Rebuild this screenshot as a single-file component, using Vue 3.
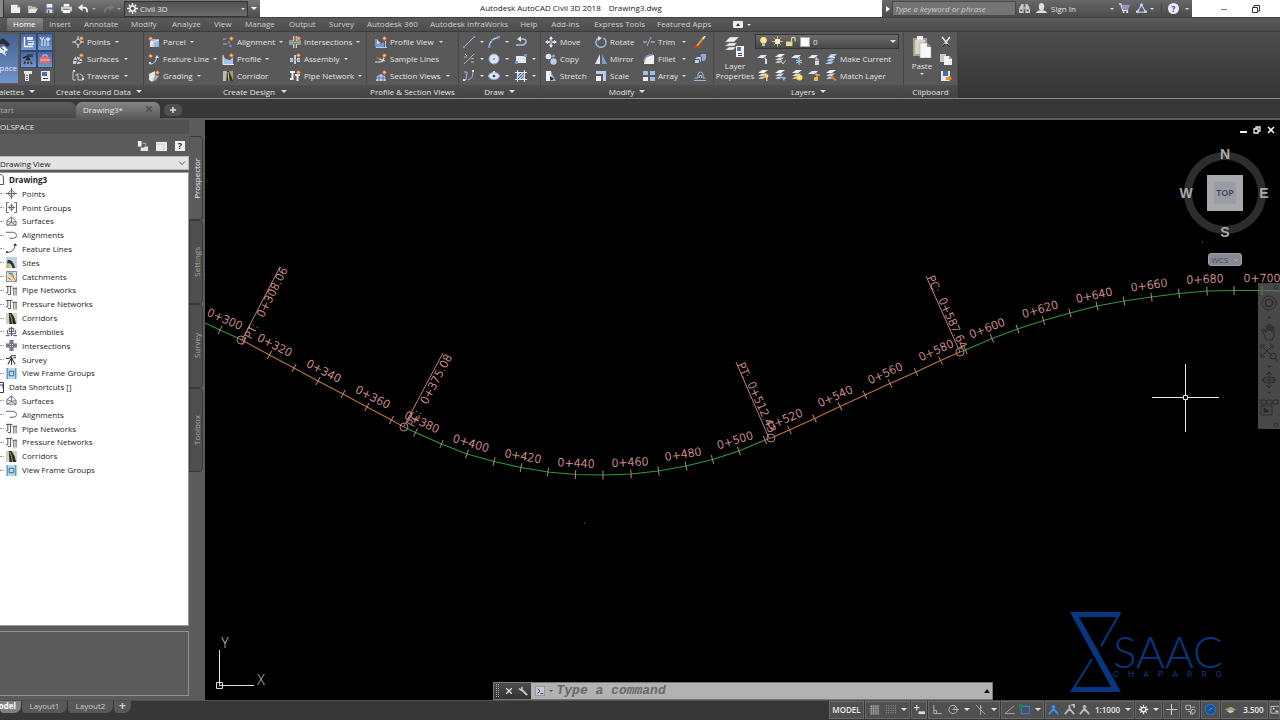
<script setup>
const spark = (x, y) =>
  `<path d="M${x} ${y - 2.6}L${x + 2.6} ${y}L${x} ${y + 2.6}L${x - 2.6} ${y}Z" fill="#d9692a"/><circle cx="${x}" cy="${y}" r="1.1" fill="#ffd9b0"/>`
const S = (d, c = '#ddd', w = 1) => `<path d="${d}" fill="none" stroke="${c}" stroke-width="${w}"/>`
const F = (d, c = '#ddd') => `<path d="${d}" fill="${c}"/>`
const sheets = F('M1 4L5 1H11L7 4Z', '#f2f2f2') + F('M1 7L5 4.5H10L7 7Z', '#d5d5d5') + F('M1 10L4 7.5H9L6 10Z', '#bcc3cc')
const oneSheet = F('M0 5L4 2H10L6.5 5Z', '#e8e8e8') + F('M3 5.4L7 5.4L9 3V6Z', '#9db4d6')

const icons = {
  newdoc: F('M1 2H8L11 5V11H1Z', '#eee') + F('M8 2V5H11Z', '#999'),
  open: F('M1 3H5L6 4H10V6H3L1 10Z', '#bbb') + F('M3 6H12L9 11H1Z', '#e2e2e2'),
  save: F('M1 1H11V11H1Z', '#5a6f94') + F('M3 1H9V5H3Z', '#f2f2f2') + F('M3 7H9V11H3Z', '#e4e4e4') + F('M4 8H6V11H4Z', '#555'),
  print: F('M3 1H9V4H3Z', '#fff') + F('M0 4H12V9H0Z', '#ccc') + F('M2 7H10V11H2Z', '#f6f6f6') + S('M2.5 7H9.5', '#777'),
  undo: F('M0 5L5 1V9Z', '#eee') + S('M4 5H7Q10 5 10 10', '#eee', 2),
  redo: F('M12 5L7 1V9Z', '#777') + S('M8 5H5Q2 5 2 10', '#777', 2),
  gear: S('M6 0V12M0 6H12M2 2L10 10M10 2L2 10', '#eee', 1.6) + '<circle cx="6" cy="6" r="3.6" fill="#eee"/><circle cx="6" cy="6" r="2" fill="#555"/>',
  binoc: F('M1 4L3 1H5V11H0V7ZM7 1H9L11 4L12 7V11H7Z', '#ccc') + F('M5 4H7V7H5Z', '#aaa') + F('M1.5 7H3.5V9H1.5ZM8.5 7H10.5V9H8.5Z', '#444'),
  person: '<ellipse cx="6" cy="4" rx="3" ry="4" fill="#ddd"/>' + F('M0 11Q1 8 5 8H7Q11 8 12 11Z', '#ddd'),
  cart: S('M0 1H2L4 8H10', '#eee', 1.3) + F('M3 2H12L10 7H4Z', '#9a8fd0') + F('M4 9H6V11H4ZM8 9H10V11H8Z', '#eee'),
  a360: S('M6 2L1.5 10H10.5Z', '#b9c6ea', 1.4) + '<circle cx="6" cy="2" r="1.5" fill="#cfd8f4"/><circle cx="1.5" cy="9.5" r="1.5" fill="#cfd8f4"/><circle cx="10.5" cy="9.5" r="1.5" fill="#cfd8f4"/>',
  points: S('M6 2.5L9.5 6L6 9.5L2.5 6ZM6 0V4M6 8V12M0 6H4M8 6H12', '#ddd') + spark(9.4, 2.4),
  surfaces: F('M1 7L4 3L9 5L11 9L7 11L1 11Z', '#c9ced6') + S('M1 7L6 8L11 9M4 3L6 8L4 11M9 5L6 8', '#4a4f58') + spark(9.4, 2.4),
  traverse: S('M1 2V10H4M6 3V10M6 10H11V6L8 4M3 5H6', '#c4c9d2') + F('M1 0H3V2H1ZM10 8H12V10H10Z', '#ddd'),
  parcel: F('M2 3H11V11H2Z', '#9fb5dc') + F('M2 3L5 6L4 11H2Z', '#e8e8e8') + S('M5 11V6L11 4', '#eee') + spark(2.6, 2.6),
  featline: S('M2 11Q8 11 9 3', '#9fb5dc', 1.3) + F('M1 9H3V11H1ZM7 5L9 2L11 5Z', '#ddd') + spark(2.6, 3),
  grading: F('M1 4L7 1V9L4 12L1 10Z', '#e6e6e6') + F('M7 5L11 6L8 10L4 12Z', '#a3adba') + spark(9.4, 2.6),
  alignment: S('M1 3H4M1 8H5M7 10H10M7 5V8', '#7f95c8', 1.3) + spark(9.4, 2.6),
  profile: F('M1 3L4 6L8 7L11 4V11H1Z', '#a9c0e8') + S('M1 2V11.5H12', '#e8e8e8') + spark(9.4, 2.4),
  corridor: F('M1 1H5L4 11H1Z', '#b9b9b9') + F('M5 1H7L11 11H5Z', '#333') + F('M7 1H11V10Z', '#a8a070') + S('M6 2L7 11', '#f0d040'),
  intersect: S('M0 5H4.5V0M7.5 0V5H12M0 8H4.5V12M7.5 12V8H12', '#cfcfcf') + S('M6 0V12M0 6.5H12', '#9a9') + spark(9.6, 2.4),
  assembly: F('M5 2H7V11H5ZM1 5H4V9H1ZM8 5H11V9H8Z', '#c9ced6') + S('M1 7H11', '#7f95c8') + spark(9.4, 2.4),
  pipenet: S('M1 2H6M3.5 2V9H1M6 5H11M8.5 5V11', '#eee', 2) + spark(9.4, 2.4),
  profview: F('M2 6L5 8L9 6V11H2Z', '#6f96dc') + S('M1 3V11.5H12M10.5 5V11', '#bcd') + F('M2 3L4 6L6 7L2 8Z', '#cfe0ff') + spark(9.4, 2.4),
  sample: S('M0 9H5Q9 9 9 3M4 6L10 8', '#ddd', 1.2) + S('M1 5H6', '#d9692a') + spark(9.4, 2.6),
  secview: F('M1 11L2 6L6 4L10 6L11 11Z', '#b9cbe8') + S('M1 8H11M4 5V11M8 5V11', '#5577aa') + spark(9.4, 2.4),
  line: S('M1 11L11 1', '#a9b9d9') + F('M0 10H2V12H0ZM10 0H12V2H10Z', '#7f95c8'),
  cline: S('M1 11L11 1', '#a9b9d9') + S('M1 4H4M8 9H11M2 1L4 3M8 6L11 5', '#bbb'),
  pline: S('M1 2H4L3 10H1M5 10Q10 9 10 2', '#a9b9d9') + F('M9 0H11V2H9ZM0 9H2V11H0Z', '#ddd'),
  arc: S('M1 11Q2 3 10 1.5', '#b5c8ec', 1.3) + F('M0 9H2.5V12H0ZM9 0H12V2.5H9ZM3 3H5V5H3Z', '#7f95c8'),
  circle: '<circle cx="6" cy="6" r="5" fill="#dfe6f2" stroke="#8fa9d8"/><circle cx="6" cy="6" r="1" fill="#789"/>',
  ellipse: '<ellipse cx="6" cy="6" rx="5.5" ry="3.5" fill="#dfe6f2" stroke="#8fa9d8"/><circle cx="6" cy="6" r="1.3" fill="#345"/>' + F('M5 1H7V3H5Z', '#ddd'),
  hook: S('M1 9H8Q11 8 11 5.5Q11 3 8 3H5', '#a9c0e8', 1.4) + F('M6 0V6L2 3Z', '#ddd'),
  rect: F('M1 3H11V10H1Z', '#e4e8ef') + F('M0 8H3V11H0ZM9 1H12V4H9Z', '#6f96dc'),
  hatch: F('M2 2H10V10H2Z', '#a9c0e8') + S('M0 2.5H12M0 9.5H12M2.5 0V12M9.5 0V12', '#e8e8e8') + S('M3 9L9 3M3 6L6 3M6 9L9 6', '#4466a0'),
  move: S('M6 1V11M1 6H11', '#fff', 1.3) + F('M6 0L8 3H4ZM6 12L8 9H4ZM0 6L3 4V8ZM12 6L9 4V8Z', '#e8e8e8') + F('M4.5 4.5H7.5V7.5H4.5Z', '#6f96dc'),
  copy: '<circle cx="3.5" cy="3.5" r="2.8" fill="#e8ecf4"/><circle cx="8.5" cy="8.5" r="3.2" fill="#b9cbe8"/><circle cx="8.5" cy="3" r="1.5" fill="#8fa9d8"/>',
  stretch: F('M1 1H6L8 11H1Z', '#f0f0f0') + F('M6 2L11 11H7Z', '#8fb0ea') + F('M5 6V11L9 9Z', '#333'),
  rotate: '<path d="M3.5 2A5 5 0 1 0 8.5 2" fill="none" stroke="#9fb5dc" stroke-width="1.5"/>' + F('M3 0L7 2L3 5Z', '#ddd'),
  mirror: F('M5 1V11H0Z', '#e4e4e4') + F('M7 1V11H12Z', '#7f9dd4'),
  scale: F('M1 1H11V11H8V4H1Z', '#b9cbf0') + F('M1 6H6V11H1Z', '#f4f4f4'),
  trim: S('M0 6H4M8 6H12', '#8fa9d8', 1.3) + S('M4 10L8 1', '#aaa'),
  fillet: F('M1 11Q1 3 10 2L11 2V11Z', '#f0f0f0') + S('M1 8Q2 2 10 1.5', '#7f9dd4', 1.3),
  array: F('M0 1H5V5H0ZM7 1H12V5H7ZM7 7H12V11H7Z', '#9fbcf0') + F('M0 7H5V11H0Z', '#eee'),
  pencil: S('M3 10L10 1', '#e8a030', 2) + S('M9 3L11 0', '#ffe9b0', 1.5) + S('M0 11H7', '#c04020', 1.6),
  explode: F('M1 6L3 4H7V8L5 10H1Z', '#b9cbe8') + F('M6 3L8 1H12V6L10 8H8V4Z', '#8fa9d8') + S('M1 6.5H5.5V10', '#556'),
  offset: S('M0 10.5H12M1 8H4V5Q4 2 6.5 2Q9 2 9 5V8H11M5.5 8V5.5H7.5V8', '#9fb5dc'),
  bulb: '<circle cx="6" cy="4.5" r="3.5" fill="#fbe68a"/>' + F('M4.5 8H7.5V11H4.5Z', '#cfc6a0'),
  sun: S('M6 0V12M0 6H12M2 2L10 10M10 2L2 10', '#c8b080') + '<circle cx="6" cy="6" r="3" fill="#fbeec0"/>',
  lock: F('M0 6H7V11H0Z', '#e8d890') + S('M6 6V3Q6 1.5 8 1.5Q10 1.5 10 3V6', '#e8d890', 1.3),
  l1: oneSheet + F('M8 6H10V11H8Z', '#bfe0ff'),
  l2: sheets + S('M7 8L9 11L12 7', '#ccc'),
  l3: oneSheet + S('M8 5V12M5 7L11 10M11 7L5 10', '#a8dcff'),
  l4: oneSheet + F('M7 8H11V12H7Z', '#cdd7e6') + S('M8 8V6H10V8', '#cdd7e6'),
  l5: F('M2 5L6 1H12L8 5ZM1 8L5 5.5H10L7 8ZM0 11L4 8.5H9L6 11Z', '#b3c8ec') + S('M5 3L10 5', '#fff'),
  l6: sheets + '<circle cx="9.5" cy="7" r="2" fill="#ffe040"/>' + F('M9 9H10.5V12H9Z', '#dc9'),
  l7: sheets + F('M7 8L12 8L10 12Z', '#8fb0ea'),
  l8: sheets + '<circle cx="8.5" cy="8.5" r="3" fill="#ffd840"/><circle cx="8.5" cy="8.5" r="1.3" fill="#fff8c0"/>',
  l9: oneSheet + F('M6 8H10V12H6Z', '#f0b830') + S('M9 8V6H12', '#ffd860'),
  l10: sheets + F('M7 7L12 11L10 12L6 9Z', '#e87828'),
  cut: S('M2 1L10 11M10 1L2 11', '#eee', 1.5) + S('M2 11L5 8M10 11L7 8', '#222', 1.4),
  copyclip: F('M0 1H6V9H0Z', '#c8c8c8') + F('M4 3H9L12 6V12H4Z', '#f2f2f2') + F('M9 3V6H12Z', '#999'),
  special: F('M1 1H10V11H1Z', '#dfe8f4') + F('M3 1H8V6H3Z', '#4a6aa8') + F('M6 7H9V5L12 8.5L9 12V10H6Z', '#e08a30'),
  t1: S('M2.5 1V10.5H11', '#fff', 1.4) + F('M5 1H11V4H5ZM6 5H12V9H6Z', '#dce8ff') + S('M6 6.5H11', '#4666a2'),
  t2: S('M1 1L3 4V10M5 1L3 4M6 3V10M9 1V10M7 2L9 5L11 2', '#e8f0ff', 1.1),
  t3: S('M2 11L6 4L10 11M6 4V11M1 5L8 2', '#20252e', 1.4) + F('M5 1H11V4H5Z', '#3a4250') + S('M3 8H10', '#8a93a4'),
  t4: F('M1 4H11V10H1Z', '#e06a68') + S('M4 4V2H8V4M1 7H11', '#f4c0be'),
  t5: F('M2 1H10V4H7V11H3V4H2Z', '#e8e8e8') + S('M4 5.5H6M4 7.5H6M4 9.5H6', '#666'),
  t6: F('M2 1H11V11H2Z', '#e8e8e8') + F('M3 2H8V6H3Z', '#4a6aa8') + S('M4 8.5H9', '#444'),
  winA: F('M1 0H5V6H1Z', '#f0f0f0') + F('M4 7H8V11H4ZM8 6H12V11H8Z', '#e4e4e4') + S('M6 2.5H9.5V5', '#bbb'),
  winB: F('M0 1H12V11H0Z', '#e8e8e8') + S('M0 3.5H8M8.5 3V11', '#ccc'),
  nPoints: S('M6 2L10 6L6 10L2 6ZM6 0V12M0 6H12', '#555'),
  nGroups: S('M3 .5H.5V11.5H3M9 .5H11.5V11.5H9', '#555') + S('M6 3L9 6L6 9L3 6ZM6 2V10M2 6H10', '#667'),
  nSurf: S('M1 10V5L6 1L11 6V10ZM6 1V7L1 10M6 7L11 10M1 5L6 7L11 6', '#667'),
  nAlign: S('M0 2.5H8Q11.5 3 11.5 6Q11.5 9 8 9H4', '#556'),
  nFeat: S('M1 10.5Q9 10 10 2', '#444') + F('M8 3L10 0L12 3Z', '#333') + F('M0 9H2V11H0Z', '#333'),
  nSites: F('M0 0H12V12H0Z', '#bcd4e4') + F('M2 3Q8 3 10 12H7Q6 6 1 7Z', '#333') + F('M0 8H4V12H0Z', '#c8c060'),
  nCatch: F('M0 0H12V12H0Z', '#f4dcc0') + F('M1 1H8V8Z', '#8cc4e8') + S('M3 3Q8 2 8 7L11 11M2 7L6 10', '#b06030') + S('M.5 .5H11.5V11.5H.5Z', '#789'),
  nPipe: S('M0 1.5H7M2 1.5V8.5H0M5 1.5V10.5H2M7 3.5H12M8.5 3.5V11.5M11 3.5V11.5', '#444'),
  nCorr: F('M0 0H12V12H0Z', '#ccd0c8') + F('M3 0H6Q10 5 11 12H4Z', '#222') + S('M4 1Q7 6 7 12', '#c8c040'),
  nAsm: S('M6 1V11M1.5 4.5V8.5H10.5V4.5M0 10.5H4M8 10.5H12M3.5 2.5H8.5V6H3.5Z', '#445'),
  nInt: S('M4.5 0V4.5H0M7.5 0V4.5H12M4.5 12V7.5H0M7.5 12V7.5H12', '#223') + S('M6 0V12M0 6H12', '#667'),
  nSurv: S('M2 11.5L6 4L10 11.5M6 4V12M0 5H3L6 2H11M8 4H11', '#333', 1.1),
  nView: F('M0 0H12V12H0Z', '#b4dcec') + S('M1.5 0V12M10.5 0V12', '#58a') + S('M3.5 3.5H8.5V8.5H3.5Z', '#458'),
  grid: S('M1 2.5H11M1 5H11M1 7.5H11M1 10H11M2.5 1V12M5 1V12M7.5 1V12M10 1V12', '#aaa', 0.8),
  dots: `<path d="M1 2H12M1 4.5H12M1 7H12M1 9.5H12" stroke="#aaa" stroke-dasharray="1 1.5" fill="none"/>`,
  dyn: S('M3 1V7M0 4H6', '#ddd', 1.2) + F('M5 8H12V11H5Z', '#ddd'),
  ortho: S('M2 1V10.5H11M2 7H5V10', '#bbb'),
  polar: '<circle cx="5.5" cy="6" r="4.5" fill="none" stroke="#bbb"/>' + S('M5.5 6H12M5.5 6L9 2', '#bbb'),
  iso: S('M1 1L11 11M6 1V12M8 3L5 6', '#aaa'),
  track: S('M11 2L1 10.5H12', '#aaa'),
  osnap: S('M2.5 3V10.5H11.5V2.5H4', '#2f7de0', 1.4) + F('M0 0H4V4H0Z', '#1d8a3c'),
  ann: S('M6 1V6M6 5L1 11M6 5L11 11M6 5V8', 'currentColor', 2) + F('M4 2H8V4H4Z', 'currentColor'),
  annB: S('M6 1V6M6 5L1 11M6 5L11 11M8 1H11V4', 'currentColor', 2),
  plus: S('M6 0V12M0 6H12', '#ccc', 1.2),
  units: S('M1 1.5H6V6H1ZM7 3.5H11M3 8H6V11H9', '#bbb') + '<circle cx="9" cy="8" r="2.2" fill="none" stroke="#bbb"/>',
  clean: '<circle cx="6" cy="6" r="5.5" fill="#1c4f96" stroke="#2080e8"/>' + S('M4 7L8 4', '#58a8ff'),
  layer: F('M0 6L6 3L12 6L6 9Z', '#8fae6a') + F('M2 8L6 10L10 8L6 7Z', '#ccc'),
  panel: S('M1 2.5H11V10H1Z', '#ccc') + F('M3 4H5V6H3ZM6 7H9V9H6Z', '#ccc'),
  wrench: S('M4 4L11 11', '#ccc', 2.2) + S('M1 3L4 5L5 1', '#ccc', 1.8),
  prompt: F('M0 0H12V12H0Z', '#8d929c') + F('M1 1H11V11H1Z', '#c4c8d0') + S('M3 3L6 6L3 9M6.5 9H10', '#333'),
}

const menus = [
  ['Home', 36], ['Insert', 35], ['Annotate', 47], ['Modify', 41], ['Analyze', 42], ['View', 31], ['Manage', 44],
  ['Output', 40], ['Survey', 38], ['Autodesk 360', 63], ['Autodesk InfraWorks', 90], ['Help', 31],
  ['Add-ins', 43], ['Express Tools', 62], ['Featured Apps', 72],
]
const ground = [['points', 'Points', 1], ['surfaces', 'Surfaces', 1], ['traverse', 'Traverse', 1]]
const design = [
  [['parcel', 'Parcel', 1], ['featline', 'Feature Line', 1], ['grading', 'Grading', 1]],
  [['alignment', 'Alignment', 1], ['profile', 'Profile', 1], ['corridor', 'Corridor', 0]],
  [['intersect', 'Intersections', 1], ['assembly', 'Assembly', 1], ['pipenet', 'Pipe Network', 1]],
]
const views = [['profview', 'Profile View', 1], ['sample', 'Sample Lines', 0], ['secview', 'Section Views', 1]]
const draw = ['line', 'arc', 'hook', 'cline', 'circle', 'rect', 'pline', 'ellipse', 'hatch']
const modify = [
  [['move', 'Move', 0], ['copy', 'Copy', 0], ['stretch', 'Stretch', 0]],
  [['rotate', 'Rotate', 0], ['mirror', 'Mirror', 0], ['scale', 'Scale', 0]],
  [['trim', 'Trim', 1], ['fillet', 'Fillet', 1], ['array', 'Array', 1]],
]
const tree = [
  ['Drawing3', 'root'], ['Points', 'nPoints'], ['Point Groups', 'nGroups'], ['Surfaces', 'nSurf'], ['Alignments', 'nAlign'],
  ['Feature Lines', 'nFeat'], ['Sites', 'nSites'], ['Catchments', 'nCatch'], ['Pipe Networks', 'nPipe'], ['Pressure Networks', 'nPipe'],
  ['Corridors', 'nCorr'], ['Assemblies', 'nAsm'], ['Intersections', 'nInt'], ['Survey', 'nSurv'], ['View Frame Groups', 'nView'],
  ['Data Shortcuts []', 'group'], ['Surfaces', 'nSurf'], ['Alignments', 'nAlign'], ['Pipe Networks', 'nPipe'],
  ['Pressure Networks', 'nPipe'], ['Corridors', 'nCorr'], ['View Frame Groups', 'nView'],
]

// Alignment geometry, in drawing-window coordinates
const segments = [
  { c: '#2c9a36', p: [[205, 323], [220, 330], [240, 339]] },
  { c: '#b8743a', p: [[240, 339], [269.5, 355], [294, 368], [318, 381], [343, 394], [367, 407], [391.5, 420], [404, 427]] },
  { c: '#2c9a36', p: [[404, 427], [415.5, 432.5], [441.5, 444], [467, 454], [494, 461.5], [521, 467.5], [548, 472], [575.5, 474.5], [603, 475], [631, 474], [658.5, 471], [686, 466], [712.5, 459.5], [739, 451], [765, 440], [771, 438]] },
  { c: '#b8743a', p: [[771, 438], [789.5, 430], [814.5, 418.5], [840, 406.5], [865, 395], [890, 383.5], [916, 372], [940.5, 360.5], [960, 352]] },
  { c: '#2c9a36', p: [[960, 352], [965.5, 350], [992, 338.5], [1017.5, 329], [1043.5, 320.5], [1070, 313], [1097, 306], [1124, 301], [1151.5, 297], [1179, 293.5], [1207, 291], [1234, 290.5], [1262, 290.5], [1290, 291.5]] },
]
const ticks = [{ x: 244, y: 341, a: 28 }]
for (const { p } of segments) {
  for (let i = 1; i < p.length - 1; i++) {
    const a = (Math.atan2(p[i + 1][1] - p[i - 1][1], p[i + 1][0] - p[i - 1][0]) * 180) / Math.PI
    ticks.push({ x: p[i][0], y: p[i][1], a })
  }
}
const labels = [
  [225, 319, 24, '0+300'], [275, 345, 27, '0+320'], [324, 371, 27, '0+340'], [373, 397, 27, '0+360'], [422, 422, 25, '0+380'],
  [471, 443, 17, '0+400'], [523, 456, 10, '0+420'], [576, 463, 3, '0+440'], [630, 462, -3, '0+460'], [683, 454, -9, '0+480'],
  [735, 440, -17, '0+500'], [785, 419, -23, '0+520'], [835, 396, -24, '0+540'], [885, 373, -24, '0+560'], [936, 350, -24, '0+580'],
  [987, 328, -21, '0+600'], [1040, 309, -16, '0+620'], [1094, 295, -12, '0+640'], [1149, 285, -8, '0+660'], [1205, 279, -2, '0+680'],
  [1262, 278, 0, '0+700'],
  [251, 331, -63, 'PT:'], [272, 292, -63, '0+308.06'], [414, 418, -62, 'PC:'], [436, 379, -62, '0+375.08'],
  [744, 370, 66, 'PT:'], [762, 407, 66, '0+512.43'], [934, 284, 66, 'PC:'], [953, 323, 66, '0+587.64'],
]
const leaders = ['M242 340L280 267', 'M404 426L443 353', 'M769 438L736 362', 'M960 352L926 276']
const nodes = [[241, 340], [404, 427], [771, 438], [960, 352]]
</script>

<template>
  <div class="app">
    <header class="titlebar">
      <div class="qat">
        <span class="appedge"></span>
        <button v-for="n in ['newdoc', 'open', 'save', 'print', 'undo']" :key="n" class="qbtn" :aria-label="n"><svg class="ic" viewBox="0 0 12 12" v-html="icons[n]" /></button>
        <i class="caret dim"></i>
        <button class="qbtn redo" aria-label="redo"><svg class="ic" viewBox="0 0 12 12" v-html="icons.redo" /></button>
        <i class="caret dim"></i>
        <div class="workspace">
          <svg class="ic" viewBox="0 0 12 12" v-html="icons.gear" />
          <select aria-label="Workspace"><option>Civil 3D</option></select>
          <i class="caret"></i>
        </div>
        <button class="more" aria-label="Customize"><i class="caret big"></i></button>
      </div>
      <div class="title"><span>Autodesk AutoCAD Civil 3D 2018</span><span>Drawing3.dwg</span></div>
      <div class="info">
        <button class="toggle" aria-label="Collapse search"><svg viewBox="0 0 10 16" width="10" height="16"><path d="M4 5L8 8L4 11Z" fill="#fff" /></svg></button>
        <input class="search" aria-label="Search" placeholder="Type a keyword or phrase" />
        <button class="qbtn" aria-label="Find"><svg class="ic" viewBox="0 0 12 12" v-html="icons.binoc" /></button>
        <button class="sign"><svg class="ic" viewBox="0 0 12 12" v-html="icons.person" />Sign In<i class="caret"></i></button>
        <button class="qbtn" aria-label="Store"><svg class="ic" viewBox="0 0 12 12" v-html="icons.cart" /></button>
        <button class="qbtn" aria-label="A360"><svg class="ic" viewBox="0 0 12 12" v-html="icons.a360" /></button>
        <i class="caret"></i>
        <button class="help" aria-label="Help"><b>?</b></button>
        <i class="caret"></i>
      </div>
      <div class="win">
        <button aria-label="Minimize"><svg width="8" height="8"><path d="M1 4.500H7" stroke="#777" /></svg></button>
        <button aria-label="Restore"><svg width="8" height="8"><path d="M.5 2.500H5.500V7.500H.5ZM2 2V.5H7.500V6H6" fill="none" stroke="#333" /></svg></button>
      </div>
    </header>

    <nav class="menus">
      <button v-for="([m, w], i) in menus" :key="m" :class="{ on: i === 0 }" :style="{ flexBasis: w + 'px' }">{{ m }}</button>
      <svg class="mini" width="10" height="7"><rect width="10" height="7" rx="1" fill="#eee" /><path d="M3 5L5 2L7 5Z" fill="#333" /></svg>
      <i class="caret"></i>
    </nav>

    <section class="ribbon">
      <div class="panel palettes">
        <div class="body">
          <button class="tool-space"><svg width="17" height="22" viewBox="0 0 17 22"><path d="M0 4L3 2L8 6L10 9L7 11L4 8L0 8Z" fill="#2a3038" /><path d="M0 12L4 10L8 14L5 16L6 20L2 17H0Z" fill="#e8eef8" /><path d="M1 12L4 14" stroke="#456" /></svg>space</button>
          <div class="pal-grid">
            <button v-for="n in 6" :key="n" :class="{ lit: n < 5 }" :aria-label="'Palette ' + n"><svg class="ic" viewBox="0 0 12 12" v-html="icons['t' + n]" /></button>
          </div>
        </div>
        <footer>Palettes<i class="caret big"></i></footer>
      </div>

      <div class="panel ground">
        <div class="body">
          <div class="col"><button v-for="[k, t] in ground" :key="k" class="cmd"><svg class="ic" viewBox="0 0 12 12" v-html="icons[k]" />{{ t }}<i class="caret"></i></button></div>
        </div>
        <footer>Create Ground Data<i class="caret big"></i></footer>
      </div>

      <div class="panel design">
        <div class="body">
          <div v-for="(c, i) in design" :key="i" class="col">
            <button v-for="[k, t, d] in c" :key="k" class="cmd"><svg class="ic" viewBox="0 0 12 12" v-html="icons[k]" />{{ t }}<i v-if="d" class="caret"></i></button>
          </div>
        </div>
        <footer>Create Design<i class="caret big"></i></footer>
      </div>

      <div class="panel views">
        <div class="body">
          <div class="col"><button v-for="[k, t, d] in views" :key="k" class="cmd"><svg class="ic" viewBox="0 0 12 12" v-html="icons[k]" />{{ t }}<i v-if="d" class="caret"></i></button></div>
        </div>
        <footer>Profile &amp; Section Views</footer>
      </div>

      <div class="panel draw">
        <div class="body">
          <button v-for="(k, i) in draw" :key="k" class="cmd" :aria-label="k"><svg class="ic" viewBox="0 0 12 12" v-html="icons[k]" /><i v-if="i !== 2" class="caret"></i></button>
        </div>
        <footer>Draw<i class="caret big"></i></footer>
      </div>

      <div class="panel modify">
        <div class="body">
          <div v-for="(c, i) in modify" :key="i" class="col">
            <button v-for="[k, t, d] in c" :key="k" class="cmd"><svg class="ic" viewBox="0 0 12 12" v-html="icons[k]" />{{ t }}<i v-if="d" class="caret end"></i></button>
          </div>
          <div class="col"><button v-for="k in ['pencil', 'explode', 'offset']" :key="k" class="cmd" :aria-label="k"><svg class="ic" viewBox="0 0 12 12" v-html="icons[k]" /></button></div>
        </div>
        <footer>Modify<i class="caret big"></i></footer>
      </div>

      <div class="panel layers">
        <div class="body">
          <button class="large"><svg width="22" height="22" viewBox="0 0 22 22"><path d="M1 6L6 1H15L10 6ZM1 10L5 7H13L10 10ZM1 14L5 11H12L9 14Z" fill="#eee" stroke="#777" stroke-width=".5" /><path d="M12 10H20V21H12Z" fill="#f4f4f4" /><path d="M13 11H17V15H13Z" fill="#5577b0" /><path d="M14 17.500H18M14 19.500H18" stroke="#444" /></svg><span>Layer</span><span>Properties</span></button>
          <div class="layer-col">
            <div class="layer-combo">
              <svg v-for="k in ['bulb', 'sun', 'lock']" :key="k" class="ic" viewBox="0 0 12 12" v-html="icons[k]" />
              <span class="swatch"></span>
              <select aria-label="Layer"><option>0</option></select>
              <i class="caret big"></i>
            </div>
            <div class="layer-row">
              <button v-for="n in 4" :key="n" class="cmd" :aria-label="'Layer tool ' + n"><svg class="ic" viewBox="0 0 12 12" v-html="icons['l' + n]" /></button>
              <button class="cmd wide"><svg class="ic" viewBox="0 0 12 12" v-html="icons.l5" />Make Current</button>
            </div>
            <div class="layer-row">
              <button v-for="n in 4" :key="n" class="cmd" :aria-label="'Layer tool ' + (n + 5)"><svg class="ic" viewBox="0 0 12 12" v-html="icons['l' + (n + 5)]" /></button>
              <button class="cmd wide"><svg class="ic" viewBox="0 0 12 12" v-html="icons.l10" />Match Layer</button>
            </div>
          </div>
        </div>
        <footer>Layers<i class="caret big"></i></footer>
      </div>

      <div class="panel clip">
        <div class="body">
          <button class="large"><svg width="20" height="22" viewBox="0 0 20 22"><path d="M1 2H15V20H1Z" fill="#a8a090" /><path d="M3 4H13V18H3Z" fill="#d8d4c8" /><path d="M5 0H11V4H5Z" fill="#eee" /><path d="M8 7H15L19 11V22H8Z" fill="#f8f8f8" stroke="#999" stroke-width=".5" /><path d="M15 7V11H19Z" fill="#888" /></svg><span>Paste</span><i class="caret"></i></button>
          <div class="col"><button v-for="k in ['cut', 'copyclip', 'special']" :key="k" class="cmd" :aria-label="k"><svg class="ic" viewBox="0 0 12 12" v-html="icons[k]" /></button></div>
        </div>
        <footer>Clipboard</footer>
      </div>
    </section>

    <nav class="files">
      <button class="start">Start</button>
      <button class="current">Drawing3*<svg width="6" height="6"><path d="M0 0L6 6M6 0L0 6" stroke="#4c4c4c" stroke-width="1.500" /></svg></button>
      <button class="add" aria-label="New drawing"><svg width="8" height="8"><path d="M4 1V7M1 4H7" stroke="#ddd" stroke-width="1.500" /></svg></button>
    </nav>

    <main class="work">
      <aside class="toolspace">
        <div class="ts-main">
          <h2>OLSPACE</h2>
          <div class="ts-bar">
            <button v-for="k in ['winA', 'winB']" :key="k" :aria-label="k"><svg class="ic" viewBox="0 0 12 12" v-html="icons[k]" /></button>
            <button class="q" aria-label="Help"><b>?</b></button>
          </div>
          <div class="view-select">
            <select aria-label="View"><option>Drawing View</option></select>
            <svg width="8" height="5"><path d="M1 .5L4 3.500L7 .5" fill="none" stroke="#555" /></svg>
          </div>
          <div class="tree">
            <ul>
              <li v-for="([t, k], i) in tree" :key="i" :class="{ top: k === 'root' || k === 'group', bold: k === 'root' }">
                <svg v-if="k === 'root' || k === 'group'" width="4" height="11"><path v-if="k === 'root'" d="M0 .5H1L3.500 3V10.500H0" fill="none" stroke="#555" /><path v-else d="M0 .5H3.500V10.500H0M0 3L3 3V6" fill="none" stroke="#335" /></svg>
                <template v-else><i class="dash"></i><svg class="ic" viewBox="0 0 12 12" v-html="icons[k]" /></template>
                {{ t }}
              </li>
            </ul>
          </div>
          <div class="detail"></div>
        </div>
        <div class="ts-tabs">
          <button v-for="(t, i) in ['Prospector', 'Settings', 'Survey', 'Toolbox']" :key="t" :class="{ on: i === 0 }"><span>{{ t }}</span></button>
        </div>
      </aside>

      <section class="canvas">
        <svg class="sheet">
          <g transform="translate(-205 -120)">
            <g fill="none" stroke-width="1.100">
              <polyline v-for="(s, i) in segments" :key="i" :points="s.p.join(' ')" :stroke="s.c" />
            </g>
            <g stroke="#c08080" fill="none">
              <path v-for="(t, i) in ticks" :key="i" d="M0 -4.500V4.500" :transform="`translate(${t.x} ${t.y}) rotate(${t.a})`" />
              <path v-for="l in leaders" :key="l" :d="l" />
              <circle v-for="n in nodes" :key="n[0]" :cx="n[0]" :cy="n[1]" r="4" />
            </g>
            <text v-for="(l, i) in labels" :key="'l' + i" class="sta" :transform="`translate(${l[0]} ${l[1]}) rotate(${l[2]})`" y="4">{{ l[3] }}</text>
            <path d="M219.500 682V650M223 685.500H254M216.500 682.500H222.500V688.500H216.500ZM219.500 682.500V685.500H222" fill="none" stroke="#ddd" />
            <text class="ucs" x="225" y="648">Y</text><text class="ucs" x="261" y="685">X</text>
            <path d="M1185.500 364V395M1185.500 400V432M1152 397.500H1183M1188 397.500H1219M1183.500 395.500H1187.500V399.500H1183.500Z" fill="none" stroke="#e8e8e8" />
            <path d="M584 523h1M1202 242h1" stroke="#777" />
          </g>
        </svg>

        <div class="doc-win">
          <button aria-label="Minimize drawing"><svg width="8" height="8"><path d="M1 6H8" stroke="#eee" stroke-width="2" /></svg></button>
          <button aria-label="Restore drawing"><svg width="8" height="8"><path d="M1 3H5V7H1ZM3 3V1H7V5H5" fill="none" stroke="#eee" stroke-width="1.300" /></svg></button>
          <button aria-label="Close drawing"><svg width="8" height="8"><path d="M1 1L7 7M7 1L1 7" stroke="#eee" stroke-width="1.600" /></svg></button>
        </div>

        <div class="cube">
          <svg width="92" height="92" viewBox="0 0 92 92">
            <circle cx="46" cy="46" r="37" fill="none" stroke="#2d2d2d" stroke-width="8" />
            <rect x="28" y="28" width="36" height="36" fill="#a8a8aa" />
            <rect x="35" y="35" width="22" height="22" fill="#9a9da4" />
            <text x="46" y="12">N</text><text x="46" y="90">S</text><text x="7" y="51">W</text><text x="85" y="51">E</text>
            <text class="face" x="46" y="49">TOP</text>
          </svg>
          <button>WCS<svg width="6" height="4"><path d="M1 1L3 3L5 1" fill="none" stroke="#aab" /></svg></button>
        </div>

        <div class="navbar">
          <svg width="22" height="146" viewBox="0 0 22 146" fill="none" stroke="#2c2c2c">
            <circle cx="18" cy="4" r="2" /><circle cx="11" cy="20" r="7" /><circle cx="11" cy="20" r="4" /><path d="M8 17H14V23H8Z" />
            <path d="M10 34.500H13M10 83.500H13M10 109.500H13" stroke-width="1.500" />
            <path d="M6 51L4 47L6 46L8 50V43H10V48V41H12V48V42H14V49V44H16V53L14 57H8Z" />
            <path d="M4 63L14 73M14 63L4 73M3 66V62H7M12 62H15V66M3 70V74H7" /><circle cx="15" cy="73" r="3" /><path d="M17 75L20 79" />
            <path d="M11 89V105M4 97H18M11 89L8 92M11 89L14 92M11 105L8 102M11 105L14 102M4 97L7 94M4 97L7 100M18 97L15 94M18 97L15 100" /><ellipse cx="11" cy="97" rx="6" ry="3" />
            <path d="M3 117H8V121H3ZM9 117H14V121H9ZM15 117H20V121H15ZM3 123H14V132H3Z" /><path d="M6 125L11 128L6 130Z" fill="#2c2c2c" /><circle cx="18" cy="142" r="2" />
          </svg>
        </div>

        <div class="brand">
          <svg width="52" height="81" viewBox="0 0 52 81"><path d="M0 0H51L49 5H9L51 80H0L3 75H41Z" fill="#08367f" /><path d="M50 1L31 34M22 47L2 79" stroke="#08367f" stroke-width="2" /></svg>
          <div class="words"><strong>SAAC</strong><div class="sub"><span v-for="(c, i) in 'CHAPARRO'" :key="i">{{ c }}</span></div></div>
        </div>

        <div class="cmdline">
          <div class="grip"><svg width="4" height="14"><path d="M.5 0V14M2.500 0V14" stroke="#aaa" stroke-dasharray="1 1" /></svg>
            <button aria-label="Close"><svg width="6" height="6"><path d="M0 0L6 6M6 0L0 6" stroke="#ddd" stroke-width="1.300" /></svg></button>
            <button aria-label="Customize command line"><svg class="ic" viewBox="0 0 12 12" v-html="icons.wrench" /></button>
          </div>
          <svg class="ic" viewBox="0 0 12 12" v-html="icons.prompt" /><i class="caret dark"></i>
          <input aria-label="Command" placeholder="Type a command" />
          <svg class="up" width="6" height="4"><path d="M0 4L3 0L6 4Z" fill="#111" /></svg>
        </div>
      </section>
    </main>

    <footer class="status">
      <nav class="layouts"><button class="on">Model</button><button>Layout1</button><button>Layout2</button><button class="plus" aria-label="New layout">+</button></nav>
      <div class="tools">
        <div class="grp g1"><button>MODEL</button></div>
        <div class="grp g2"><svg class="ic" viewBox="0 0 12 12" v-html="icons.grid" /><svg class="ic" viewBox="0 0 12 12" v-html="icons.dots" /><i class="caret big"></i></div>
        <div class="grp g3"><svg class="ic" viewBox="0 0 12 12" v-html="icons.dyn" /></div>
        <div class="grp g4"><svg class="ic" viewBox="0 0 12 12" v-html="icons.ortho" /><svg class="ic" viewBox="0 0 12 12" v-html="icons.polar" /><i class="caret big"></i><svg class="ic" viewBox="0 0 12 12" v-html="icons.iso" /><i class="caret big"></i></div>
        <div class="grp g5"><svg class="ic" viewBox="0 0 12 12" v-html="icons.track" /><svg class="ic" viewBox="0 0 12 12" v-html="icons.osnap" /><i class="caret big"></i></div>
        <div class="grp g6"><svg class="ic blue" viewBox="0 0 12 12" v-html="icons.ann" /><svg class="ic" viewBox="0 0 12 12" v-html="icons.annB" /><svg class="ic" viewBox="0 0 12 12" v-html="icons.ann" /><button>1:1000</button><i class="caret big"></i></div>
        <div class="grp g7"><svg class="ic" viewBox="-1 -1 14 14" v-html="icons.gear" /><i class="caret big"></i></div>
        <div class="grp g8"><svg class="ic" viewBox="0 0 12 12" v-html="icons.plus" /></div>
        <div class="grp g9"><svg class="ic" viewBox="0 0 12 12" v-html="icons.units" /></div>
        <div class="grp g9"><svg class="ic" viewBox="0 0 12 12" v-html="icons.clean" /></div>
        <div class="grp g10"><svg class="ic" viewBox="0 0 12 12" v-html="icons.layer" /><button>3.500</button></div>
        <div class="grp g11"><svg class="ic" viewBox="0 0 12 12" v-html="icons.panel" /></div>
      </div>
    </footer>
  </div>
</template>

<style>
html, body { background: #373737; overflow: hidden; }
</style>

<style scoped>
* { box-sizing: border-box; }
.app { height: 100vh; display: flex; flex-direction: column; overflow: hidden; font: 8px/11px "Open Sans", "Noto Sans", sans-serif; color: #e4e4e4; background: #373737; }
button, input, select { font: inherit; color: inherit; background: none; border: 0; padding: 0; margin: 0; border-radius: 0; outline: none; }
button { white-space: nowrap; }
select { appearance: none; }
svg { display: block; flex: none; }
.ic { width: 12px; height: 12px; }
.caret { flex: none; width: 0; height: 0; border: 2px solid transparent; border-top-color: #e0e0e0; border-bottom: 0; }
.caret.big { border-width: 3px; border-bottom: 0; }
.caret.dim { border-top-color: #aaa; }
.caret.dark { border-top-color: #555; }

.titlebar { flex: none; height: 17px; display: flex; background: #fff; }
.qat { flex: none; width: 260px; display: flex; align-items: center; background: linear-gradient(#777, #4c4c4c); }
.appedge { width: 4px; height: 17px; margin-right: 3px; background: #8a8a8a; border-right: 1px solid #333; }
.qbtn { width: 17px; display: flex; justify-content: center; }
.qat .redo { margin-left: 4px; }
.qat .ic { width: 11px; height: 11px; }
.workspace { margin-left: 3px; width: 124px; height: 16px; padding: 0 2px; display: flex; align-items: center; border: 1px solid #333; background: linear-gradient(#525252, #6a6a6a); }
.workspace select { flex: 1; padding-left: 2px; }
.more { flex: 1; display: flex; justify-content: center; }
.more .caret { border-top-color: #fff; }
.title { flex: 1; display: flex; justify-content: center; gap: 8px; line-height: 16px; color: #222; }
.info { flex: none; width: 310px; display: flex; align-items: center; background: linear-gradient(#686868, #4b4b4b); }
.toggle { width: 10px; }
.search { width: 124px; height: 15px; padding: 0 2px 1px; background: #747474; border: 1px solid #4a4a4a; font-style: italic; }
.search::placeholder { color: #ccc; opacity: 1; }
.info .ic { width: 11px; height: 11px; }
.sign { width: 83px; display: flex; align-items: center; gap: 4px; padding-left: 3px; }
.sign .caret { margin-left: auto; margin-right: 2px; }
.help { width: 24px; margin-left: 7px; border-left: 1px solid #444; display: flex; justify-content: center; }
.help b { width: 11px; height: 11px; border-radius: 50%; background: #eef; color: #1a3e9a; line-height: 11px; text-align: center; }
.win { flex: none; width: 88px; display: flex; align-items: center; padding-left: 28px; gap: 24px; }

.menus { flex: none; height: 14px; display: flex; align-items: stretch; padding-left: 7px; background: linear-gradient(#5a5a5a, #4d4d4d); border-top: 1px solid #444; color: #cfcfcf; }
.menus button { flex: none; padding: 0 6px 1px; text-align: left; line-height: 12px; }
.menus .on { background: linear-gradient(#8a8a8a, #646464); color: #fff; border-radius: 2px 2px 0 0; }
.mini { margin: 3px 4px 0 10px; }
.menus .caret { margin-top: 6px; }

.ribbon { flex: none; height: 68px; display: flex; background: linear-gradient(#4c4c4c, #343434); border-top: 1px solid #3c3c3c; border-bottom: 1px solid #8a8a8a; }
.panel { flex: none; display: flex; flex-direction: column; background: #595959; border-right: 1px solid #474747; padding-top: 1px; }
.panel .body { flex: 1; display: flex; padding-bottom: 1px; }
.panel footer { height: 13px; display: flex; align-items: center; justify-content: center; gap: 5px; background: linear-gradient(#4e4e4e, #434343); white-space: nowrap; padding-bottom: 1px; }
.palettes { width: 55px; } .ground { width: 89px; } .design { width: 223px; } .views { width: 92px; }
.draw { width: 82px; } .modify { width: 173px; } .layers { width: 190px; } .clip { width: 54px; }
.col { display: grid; grid-template-rows: repeat(3, 1fr); }
.cmd { display: flex; align-items: center; gap: 3px; text-align: left; }
.cmd .caret { margin-left: 2px; }
.tool-space { width: 18px; margin: 1px 0; display: flex; flex-direction: column; align-items: flex-end; justify-content: flex-start; gap: 4px; padding-right: 1px; overflow: hidden; background: linear-gradient(#46618f, #6f93cc); }
.tool-space svg { margin-top: 2px; }
.pal-grid { margin-left: 2px; flex: none; width: 33px; display: grid; grid-template-columns: 1fr 1fr; }
.pal-grid button { display: flex; align-items: center; justify-content: center; }
.lit { background: linear-gradient(#4666a2, #7396cc); }
.pal-grid .lit { border: 1px solid #34496e; }
.palettes footer { justify-content: flex-end; padding-right: 19px; }
.ground .col { margin-left: 17px; }
.design .body { padding-left: 4px; }
.design .col:nth-child(1) { width: 74px; } .design .col:nth-child(2) { width: 67px; }
.design .caret { margin-left: 1px; }
.views .body { padding-left: 8px; }
.draw .body { display: grid; grid-template: repeat(3, 1fr) / 25px 27px 25px; padding-left: 4px; }
.modify .body { padding-left: 4px; }
.modify .col:nth-child(1) { width: 50px; } .modify .col:nth-child(2) { width: 48px; } .modify .col:nth-child(3) { width: 51px; }
.modify .col:nth-child(3) .caret { margin-left: auto; margin-right: 8px; }
.modify .cmd { gap: 3px; }
.large { display: flex; flex-direction: column; align-items: center; padding-top: 3px; line-height: 10px; }
.large svg { margin-bottom: 3px; }
.layers .large { width: 42px; margin-left: 1px; }
.layer-col { flex: 1; display: grid; grid-template-rows: 17px 17px 16px; }
.layer-combo { width: 144px; height: 15px; margin-top: 1px; display: flex; align-items: center; gap: 3px; padding: 0 2px; background: linear-gradient(#6b6b6b, #484848); border: 1px solid #353535; }
.layer-combo .ic { width: 11px; height: 11px; }
.layer-combo .swatch { width: 10px; height: 10px; background: #fff; border: 1px solid #aaa; }
.layer-combo select { flex: 1; }
.layer-row { display: flex; align-items: center; }
.layer-row .cmd { width: 17px; padding-left: 2px; }
.layer-row .wide { width: 80px; }
.clip .large { width: 36px; }
.clip .large .caret { margin-top: 2px; }

.files { flex: none; height: 20px; display: flex; align-items: flex-end; margin-top: 1px; background: #373737; border-bottom: 2px solid #5a5a5a; }
.files button { height: 16px; padding-bottom: 2px; }
.files .start { width: 76px; text-align: left; color: #a8a8a8; background: linear-gradient(#5e5e5e, #484848); border-radius: 0 6px 0 0; text-indent: -4px; overflow: hidden; }
.files .current { width: 84px; padding: 0 8px 2px 7px; display: flex; align-items: center; justify-content: space-between; background: linear-gradient(#858585, #5c5c5c); border-radius: 6px 6px 0 0; }
.files .add { width: 18px; height: 12px; margin: 0 0 2px 4px; padding: 0; display: flex; align-items: center; justify-content: center; background: #505050; border-radius: 5px; }

.work { flex: 1; min-height: 0; display: flex; }
.toolspace { flex: none; width: 205px; display: flex; background: #5b5b5b; color: #222; }
.ts-main { width: 189px; display: flex; flex-direction: column; }
.ts-main h2 { margin: 0; height: 14px; font: inherit; line-height: 14px; color: #e4e4e4; background: #515151; }
.ts-bar { height: 22px; padding: 2px 4px 0 0; display: flex; align-items: center; justify-content: flex-end; gap: 8px; }
.ts-bar .ic { width: 11px; height: 11px; }
.ts-bar .q { width: 10px; height: 10px; background: #f0f0f0; color: #223; font-size: 9px; line-height: 10px; }
.view-select { height: 14px; display: flex; align-items: center; padding-right: 2px; background: #e4e4e4; border: 1px solid #bbb; border-left: 0; }
.view-select select { flex: 1; }
.tree { flex: 1; margin-top: 2px; background: #fff; border: 1px solid #999; border-left: 0; }
.tree ul { height: 304px; margin: 0; padding: 0; list-style: none; display: grid; grid-auto-rows: 1fr; }
.tree li { display: flex; align-items: center; gap: 5px; line-height: 12px; }
.tree .ic { width: 11px; height: 11px; }
.tree .bold { font-weight: 700; }
.dash { width: 4px; margin-right: -3px; border-top: 1px dotted #999; }
.detail { flex: none; height: 65px; margin: 5px 0 4px; border: 1px solid #929292; border-left: 0; }
.ts-tabs { width: 14px; padding-top: 16px; display: flex; flex-direction: column; }
.ts-tabs button { height: 84px; display: flex; align-items: center; justify-content: center; color: #a8a8a8; background: #4f4f4f; border: 1px solid #383838; border-radius: 0 4px 4px 0; }
.ts-tabs .on { background: #5b5b5b; color: #eee; border-left-color: #5b5b5b; }
.ts-tabs span { writing-mode: vertical-rl; transform: rotate(180deg); }

.canvas { flex: 1; position: relative; overflow: hidden; background: #000; }
.sheet { width: 100%; height: 100%; }
.sta { font: 200 11px "DejaVu Sans Light", "DejaVu Sans", sans-serif; fill: #d89696; stroke: #d89696; stroke-width: 0.3; text-anchor: middle; }
.ucs { font: 300 14px "Open Sans", sans-serif; fill: #ccc; text-anchor: middle; }
.doc-win { position: absolute; top: 6px; right: 5px; display: flex; gap: 6px; }
.cube { position: absolute; top: 27px; right: 9px; display: flex; flex-direction: column; align-items: center; gap: 14px; }
.cube text { font: 700 14px "Liberation Sans", sans-serif; fill: #a9a9a9; text-anchor: middle; }
.cube .face { font: 600 9px "Open Sans", sans-serif; fill: #3c4354; }
.cube button { width: 34px; height: 13px; display: flex; align-items: center; justify-content: space-around; color: #444a58; background: #898994; border: 1px solid #a0a0a8; border-radius: 3px; }
.navbar { position: absolute; top: 163px; right: 0; width: 22px; background: rgba(100, 100, 100, 0.72); }
.brand { position: absolute; right: 58px; bottom: 7px; display: flex; align-items: flex-end; color: #08367f; }
.words { width: 109px; margin-left: -9px; padding-bottom: 15px; }
.words strong { display: block; font: 300 44px/38px Lato, sans-serif; }
.sub { display: flex; justify-content: space-between; font: 500 8px/8px Inter, sans-serif; }
.cmdline { position: absolute; left: 50%; bottom: 0; width: 500px; height: 18px; transform: translateX(-50%); display: flex; align-items: center; gap: 4px; background: #b2b2b2; border: 1px solid #777; }
.grip { width: 37px; height: 100%; display: flex; align-items: center; justify-content: space-around; background: linear-gradient(#4c4c4c, #333); }
.cmdline .ic { width: 10px; height: 10px; }
.cmdline input { flex: 1; font: italic 700 13px/16px "Liberation Mono", monospace; color: #333; }
.cmdline input::placeholder { color: #686868; opacity: 1; }
.cmdline .up { margin-right: 2px; }

.status { flex: none; height: 20px; display: flex; justify-content: space-between; background: #373737; border-top: 1px solid #505050; overflow: hidden; }
.layouts { display: flex; height: 12px; gap: 1px; color: #ccc; }
.layouts button { width: 45px; padding-bottom: 3px; background: #585858; border-radius: 0 0 7px 4px; line-height: 9px; text-align: center; }
.layouts .on { width: 21px; display: flex; justify-content: flex-end; padding-right: 5px; overflow: hidden; background: #808080; color: #fff; font-weight: 700; }
.layouts .plus { width: 17px; font-size: 12px; font-weight: 700; }
.tools { display: flex; gap: 1px; height: 18px; color: #eee; }
.grp { flex: none; display: flex; align-items: center; justify-content: space-around; background: #505050; border: 1px solid #686868; padding-bottom: 1px; }
.grp .ic { width: 11px; height: 11px; color: #bbb; }
.grp .blue { color: #3a8ef0; }
.grp button { font-weight: 600; }
.g1 { width: 35px; } .g2 { width: 45px; } .g3 { width: 16px; } .g4 { width: 72px; } .g5 { width: 43px; } .g6 { width: 89px; }
.g7 { width: 27px; } .g8 { width: 17px; } .g9 { width: 19px; } .g10 { width: 47px; } .g11 { width: 11px; overflow: hidden; justify-content: flex-start; }
</style>
